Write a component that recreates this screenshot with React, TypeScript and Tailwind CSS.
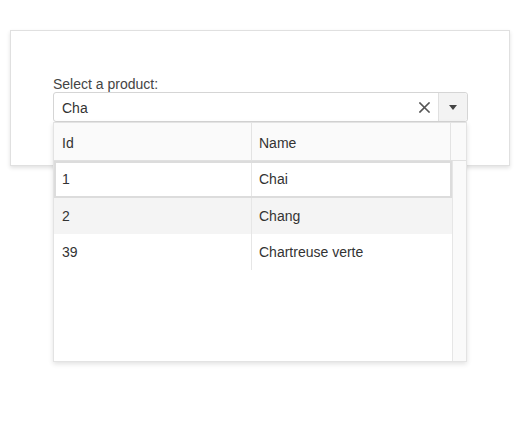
import { useState } from 'react'

type Product = { id: number; name: string }

const PRODUCTS: Product[] = [
  { id: 1, name: 'Chai' },
  { id: 2, name: 'Chang' },
  { id: 39, name: 'Chartreuse verte' },
]

function ClearIcon() {
  return (
    <svg width="11" height="11" viewBox="0 0 11 11" aria-hidden="true">
      <path d="M1 1 L10 10 M10 1 L1 10" stroke="#555" strokeWidth="1.6" strokeLinecap="square" />
    </svg>
  )
}

function CaretDown() {
  return (
    <svg width="8" height="5" viewBox="0 0 8 5" aria-hidden="true">
      <path d="M0 0 H8 L4 5 Z" fill="#444" />
    </svg>
  )
}

export default function App() {
  const [query, setQuery] = useState('Cha')
  const selected = 1

  return (
    <div className="min-h-[422px] bg-white px-[10px] pt-[30px] font-['Liberation_Sans',Arial,sans-serif] text-[14px] text-[#333]">
      {/* Demo card */}
      <div className="h-[136px] w-[500px] border border-[#e0e0e0] bg-white pl-[42px] pt-[45px] shadow-[0_2px_4px_rgba(0,0,0,0.12)]">
        <label className="block leading-[16px] text-[#444]">Select a product:</label>

        {/* Combo box */}
        <div className="relative w-[415px]">
          <div className="flex h-[30px] items-stretch rounded-[3px] border border-[#d5d5d5] bg-white">
            <input
              value={query}
              onChange={(e) => setQuery(e.target.value)}
              className="min-w-0 flex-1 bg-transparent pl-[8px] pt-[2px] text-[14px] text-[#333] outline-none"
            />
            <button type="button" className="flex w-[28px] items-center justify-center pt-[1px]" aria-label="Clear">
              <ClearIcon />
            </button>
            <button
              type="button"
              className="flex w-[29px] items-center justify-center rounded-r-[3px] border-l border-[#e0e0e0] bg-[#f3f3f3]"
              aria-label="Open"
            >
              <CaretDown />
            </button>
          </div>

          {/* Dropdown grid */}
          <div className="absolute left-0 top-full z-10 flex h-[240px] w-[414px] flex-col border border-[#e3e3e3] bg-white shadow-[0_2px_5px_rgba(0,0,0,0.12)]">
            <div className="flex h-[38px] shrink-0 border-b border-[#e0e0e0] bg-[#fafafa]">
              <div className="flex w-[198px] items-center border-r border-[#e3e3e3] px-[8px] pt-[3px]">Id</div>
              <div className="flex w-[199px] items-center border-r border-[#e3e3e3] px-[7px] pt-[3px]">Name</div>
              <div className="flex-1" />
            </div>
            <div className="flex flex-1">
              <div className="w-[398px]">
                {PRODUCTS.map((p, i) => (
                  <div
                    key={p.id}
                    className={
                      p.id === selected
                        ? 'flex h-[37px] border-2 border-[#dcdcdc] bg-white'
                        : i % 2 === 1
                          ? 'flex h-[36px] bg-[#f4f4f4]'
                          : 'flex h-[36px] bg-white'
                    }
                  >
                    <div
                      className={`flex items-center border-r border-[#e6e6e6] ${
                        p.id === selected ? 'w-[196px] pl-[6px]' : 'w-[198px] pl-[8px]'
                      }`}
                    >
                      {p.id}
                    </div>
                    <div className="flex flex-1 items-center pl-[7px]">{p.name}</div>
                  </div>
                ))}
              </div>
              <div className="flex-1 border-l border-[#e6e6e6] bg-[#fafafa]" />
            </div>
          </div>
        </div>
      </div>
    </div>
  )
}
